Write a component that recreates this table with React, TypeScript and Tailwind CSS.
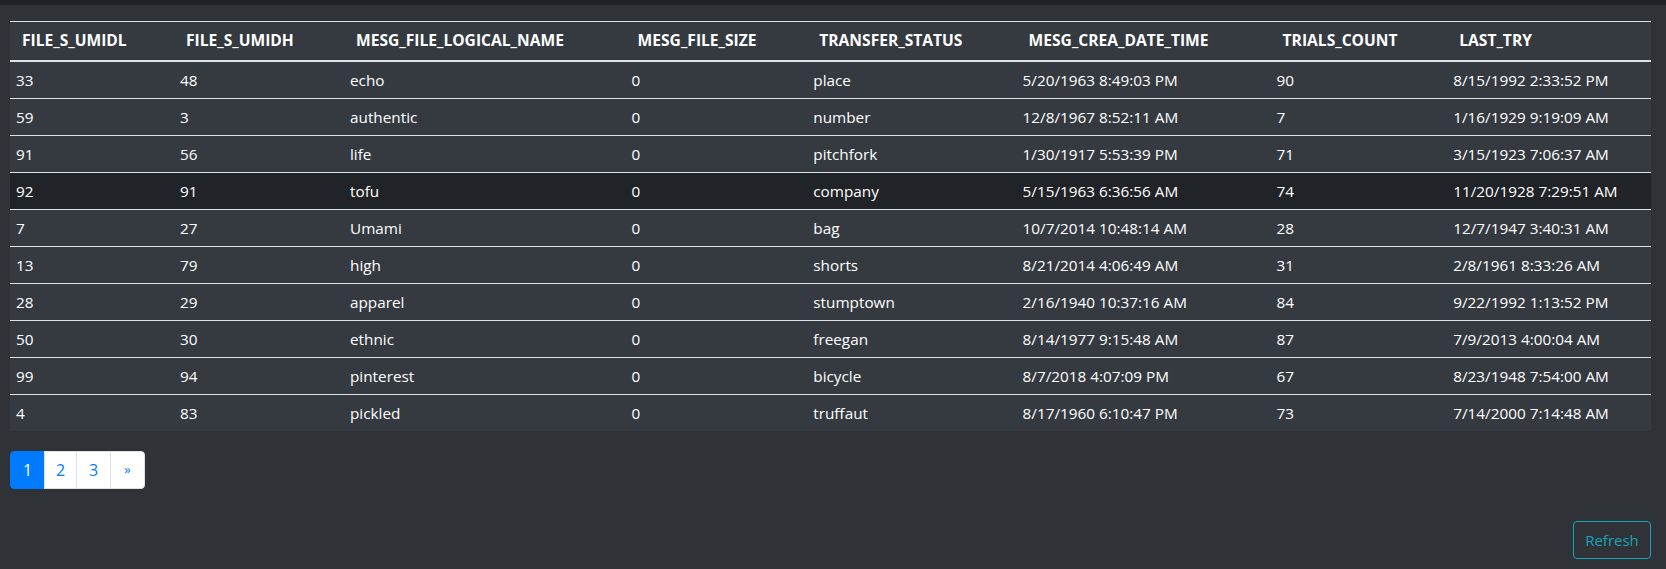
import React from 'react';

type Row = [string, string, string, string, string, string, string, string];

const columns = [
  'FILE_S_UMIDL',
  'FILE_S_UMIDH',
  'MESG_FILE_LOGICAL_NAME',
  'MESG_FILE_SIZE',
  'TRANSFER_STATUS',
  'MESG_CREA_DATE_TIME',
  'TRIALS_COUNT',
  'LAST_TRY',
];

const rows: Row[] = [
  ['33', '48', 'echo', '0', 'place', '5/20/1963 8:49:03 PM', '90', '8/15/1992 2:33:52 PM'],
  ['59', '3', 'authentic', '0', 'number', '12/8/1967 8:52:11 AM', '7', '1/16/1929 9:19:09 AM'],
  ['91', '56', 'life', '0', 'pitchfork', '1/30/1917 5:53:39 PM', '71', '3/15/1923 7:06:37 AM'],
  ['92', '91', 'tofu', '0', 'company', '5/15/1963 6:36:56 AM', '74', '11/20/1928 7:29:51 AM'],
  ['7', '27', 'Umami', '0', 'bag', '10/7/2014 10:48:14 AM', '28', '12/7/1947 3:40:31 AM'],
  ['13', '79', 'high', '0', 'shorts', '8/21/2014 4:06:49 AM', '31', '2/8/1961 8:33:26 AM'],
  ['28', '29', 'apparel', '0', 'stumptown', '2/16/1940 10:37:16 AM', '84', '9/22/1992 1:13:52 PM'],
  ['50', '30', 'ethnic', '0', 'freegan', '8/14/1977 9:15:48 AM', '87', '7/9/2013 4:00:04 AM'],
  ['99', '94', 'pinterest', '0', 'bicycle', '8/7/2018 4:07:09 PM', '67', '8/23/1948 7:54:00 AM'],
  ['4', '83', 'pickled', '0', 'truffaut', '8/17/1960 6:10:47 PM', '73', '7/14/2000 7:14:48 AM'],
];

// row the pointer is over in the screenshot
const HOVER_ROW = 3;

const gridCols = 'grid grid-cols-[164px_170px_281.6px_181.7px_209.3px_254px_176.7px_203.7px]';

function TransferTable() {
  return (
    <div className="w-[1641px] bg-[#343a40] text-white">
      <div className={`${gridCols} h-[41px] border-t border-b-2 border-[#dee2e6] items-center`}>
        {columns.map(c => (
          <div key={c} className="pl-[12px] text-[15.6px] font-bold whitespace-nowrap">
            {c}
          </div>
        ))}
      </div>
      {rows.map((r, i) => (
        <div
          key={i}
          className={`${gridCols} items-center ${i === 0 ? 'h-[36px]' : 'h-[37px] border-t border-[#dee2e6]'} ${
            i === HOVER_ROW ? 'bg-[#202327]' : ''
          }`}
        >
          {r.map((cell, j) => (
            <div key={j} className="pl-[6px] text-[15.3px] whitespace-nowrap">
              {cell}
            </div>
          ))}
        </div>
      ))}
    </div>
  );
}

function Pagination() {
  const item = 'flex h-[38px] items-center justify-center border border-[#dee2e6] bg-white text-[#007bff] -ml-px';
  return (
    <div className="flex text-[16px]">
      <div className="flex h-[38px] w-[35px] items-center justify-center rounded-l-[4px] border border-[#007bff] bg-[#007bff] text-white">
        1
      </div>
      <div className={`${item} w-[33px]`}>2</div>
      <div className={`${item} w-[35px]`}>3</div>
      <div className={`${item} w-[35px] rounded-r-[4px] text-[13px]`}>»</div>
    </div>
  );
}

export default function App() {
  return (
    <div className="min-h-[569px] bg-[#2f3237] font-['Open_Sans',sans-serif]">
      <div className="h-[5px] bg-[#1e2128]" />
      <div className="pl-[10px] pr-[15px] pt-[16px]">
        <TransferTable />
        <div className="mt-[20px]">
          <Pagination />
        </div>
        <div className="mt-[32px] flex justify-end">
          <button className="h-[38px] w-[78px] rounded-[4px] border border-[#17a2b8] text-[15px] text-[#17a2b8]">
            Refresh
          </button>
        </div>
      </div>
    </div>
  );
}
